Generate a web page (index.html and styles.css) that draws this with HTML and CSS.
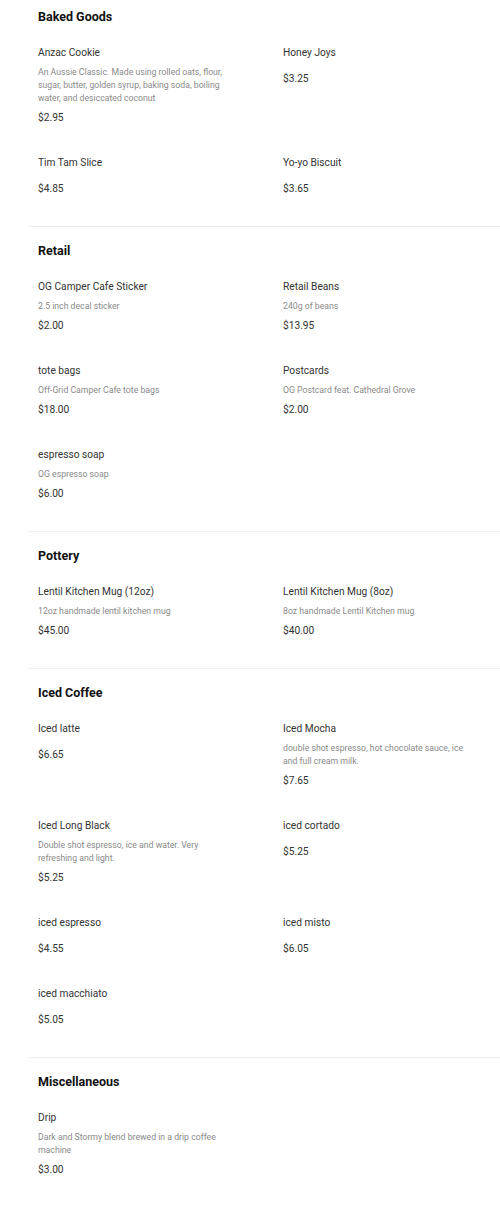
FILE: index.html
```html
<!DOCTYPE html>
<html>
<head>
<meta charset="utf-8">
<link rel="stylesheet" href="styles.css">
</head>
<body>
<main class="menu">
  <section class="category first">
    <h2 class="cat-title">Baked Goods</h2>
    <div class="items">
      <div class="item"><div class="name">Anzac Cookie</div><div class="desc">An Aussie Classic. Made using rolled oats, flour, sugar, butter, golden syrup, baking soda, boiling water, and desiccated coconut</div><div class="price">$2.95</div></div>
      <div class="item"><div class="name">Honey Joys</div><div class="desc"></div><div class="price">$3.25</div></div>
      <div class="item"><div class="name">Tim Tam Slice</div><div class="desc"></div><div class="price">$4.85</div></div>
      <div class="item"><div class="name">Yo-yo Biscuit</div><div class="desc"></div><div class="price">$3.65</div></div>
    </div>
  </section>
  <section class="category">
    <h2 class="cat-title">Retail</h2>
    <div class="items">
      <div class="item"><div class="name">OG Camper Cafe Sticker</div><div class="desc">2.5 inch decal sticker</div><div class="price">$2.00</div></div>
      <div class="item"><div class="name">Retail Beans</div><div class="desc">240g of beans</div><div class="price">$13.95</div></div>
      <div class="item"><div class="name">tote bags</div><div class="desc">Off-Grid Camper Cafe tote bags</div><div class="price">$18.00</div></div>
      <div class="item"><div class="name">Postcards</div><div class="desc">OG Postcard feat. Cathedral Grove</div><div class="price">$2.00</div></div>
      <div class="item"><div class="name">espresso soap</div><div class="desc">OG espresso soap</div><div class="price">$6.00</div></div>
    </div>
  </section>
  <section class="category">
    <h2 class="cat-title">Pottery</h2>
    <div class="items">
      <div class="item"><div class="name">Lentil Kitchen Mug (12oz)</div><div class="desc">12oz handmade lentil kitchen mug</div><div class="price">$45.00</div></div>
      <div class="item"><div class="name">Lentil Kitchen Mug (8oz)</div><div class="desc">8oz handmade Lentil Kitchen mug</div><div class="price">$40.00</div></div>
    </div>
  </section>
  <section class="category">
    <h2 class="cat-title">Iced Coffee</h2>
    <div class="items">
      <div class="item"><div class="name">Iced latte</div><div class="desc"></div><div class="price">$6.65</div></div>
      <div class="item"><div class="name">Iced Mocha</div><div class="desc">double shot espresso, hot chocolate sauce, ice and full cream milk.</div><div class="price">$7.65</div></div>
      <div class="item"><div class="name">Iced Long Black</div><div class="desc">Double shot espresso, ice and water. Very refreshing and light.</div><div class="price">$5.25</div></div>
      <div class="item"><div class="name">iced cortado</div><div class="desc"></div><div class="price">$5.25</div></div>
      <div class="item"><div class="name">iced espresso</div><div class="desc"></div><div class="price">$4.55</div></div>
      <div class="item"><div class="name">iced misto</div><div class="desc"></div><div class="price">$6.05</div></div>
      <div class="item"><div class="name">iced macchiato</div><div class="desc"></div><div class="price">$5.05</div></div>
    </div>
  </section>
  <section class="category">
    <h2 class="cat-title">Miscellaneous</h2>
    <div class="items">
      <div class="item"><div class="name">Drip</div><div class="desc">Dark and Stormy blend brewed in a drip coffee machine</div><div class="price">$3.00</div></div>
    </div>
  </section>
</main>
</body>
</html>
```
FILE: styles.css
```css
html, body {
  margin: 0;
  padding: 0;
  background: #ffffff;
}
body {
  font-family: Roboto, "Liberation Sans", sans-serif;
  color: #333333;
}
.menu {
  margin-left: 28px;
}
.category {
  border-bottom: 1px solid #f0f0f0;
  padding: 15px 0 30px 10px;
}
.category.first {
  padding-top: 8px;
}
.cat-title {
  margin: 0 0 20px 0;
  font-size: 12.5px;
  line-height: 18px;
  font-weight: 700;
  color: #111111;
}
.items {
  display: grid;
  grid-template-columns: 245px 1fr;
  row-gap: 31px;
}
.item {
  display: flex;
  flex-direction: column;
  gap: 6px;
  max-width: 190px;
}
.name {
  font-size: 10.2px;
  line-height: 14px;
  color: #333333;
}
.desc {
  font-size: 8.7px;
  line-height: 13px;
  color: #8a8a8a;
}
.price {
  font-size: 10.2px;
  line-height: 14px;
  color: #333333;
}
```
